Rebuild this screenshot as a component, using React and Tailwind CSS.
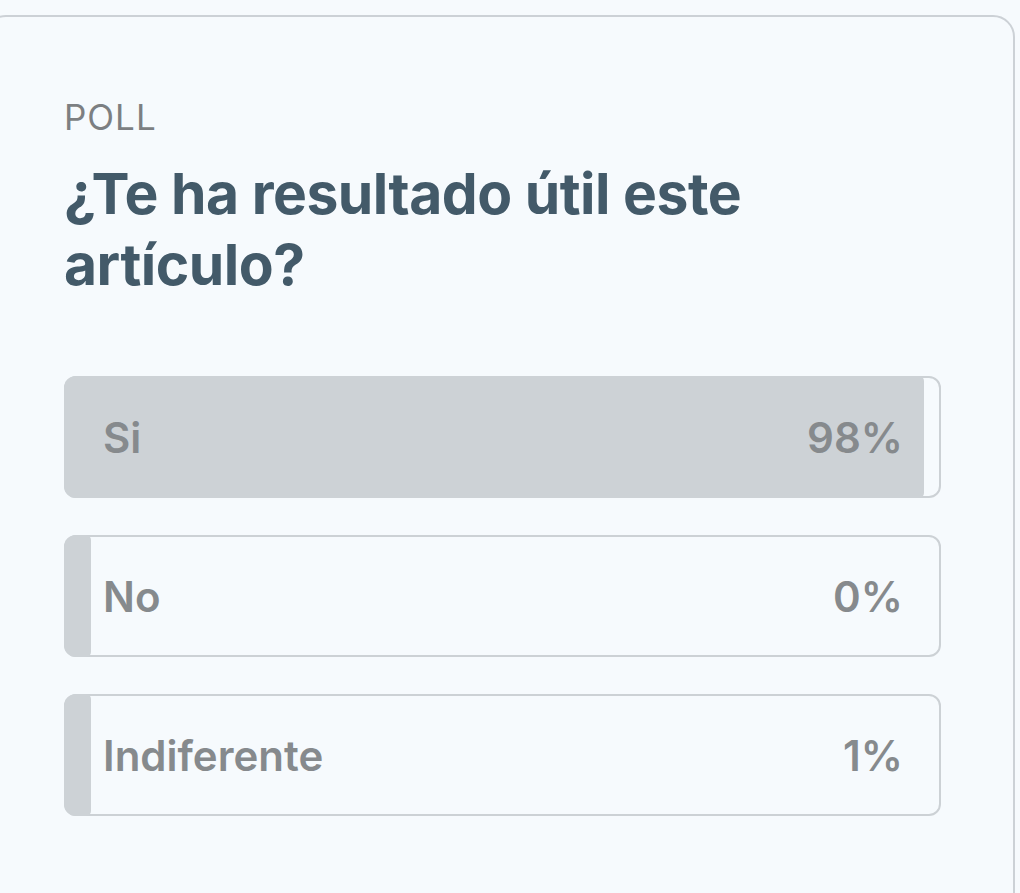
import React from "react";

const options = [
  { label: "Si", pct: 98 },
  { label: "No", pct: 0 },
  { label: "Indiferente", pct: 1 },
];

const PollOption = ({ label, pct }) => {
  return (
    <div className="relative h-[122px] rounded-[12px] border-2 border-[#ccd1d5]">
      {/* fill bar sits over the border */}
      <div
        className="absolute top-[-2px] bottom-[-2px] left-[-2px] rounded-l-[12px] rounded-r-[5px] bg-[#cdd2d6]"
        style={{ width: `max(27px, calc(${pct}% + 4px))` }}
      />
      <div className="relative flex items-center justify-between h-full pl-[37px] pr-[36px] text-[42px] font-semibold text-[#868a8d]">
        <span>{label}</span>
        <span>{pct}%</span>
      </div>
    </div>
  );
};

export default function App() {
  return (
    <div
      className="h-[893px] w-full overflow-hidden bg-[#f6fafd] pt-[15px]"
      style={{ fontFamily: "Inter, 'Noto Sans', sans-serif" }}
    >
      <div className="ml-[-16px] w-[1031px] h-[960px] rounded-[22px] border-[2.5px] border-[#ccd1d6] bg-[#f6fafd] pt-[80px] pl-[78px] pr-[72px]">
        <div className="text-[35px] leading-[40px] tracking-[1px] text-[#7c7f82]">
          POLL
        </div>
        <h2 className="mt-[21px] text-[57px] leading-[71px] font-bold tracking-[-0.5px] text-[#435a69]">
          ¿Te ha resultado útil este
          <br />
          artículo?
        </h2>
        <div className="mt-[76px] flex flex-col gap-[37px]">
          {options.map((o) => (
            <PollOption key={o.label} label={o.label} pct={o.pct} />
          ))}
        </div>
      </div>
    </div>
  );
}
